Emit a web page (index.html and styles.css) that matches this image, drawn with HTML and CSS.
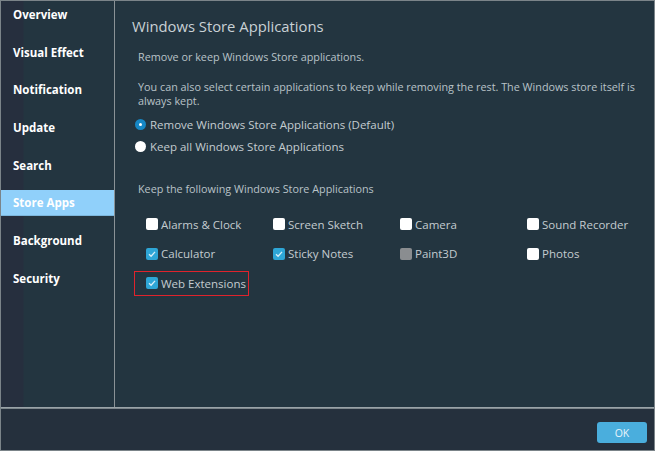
FILE: index.html
```html
<!DOCTYPE html>
<html>
<head>
<meta charset="utf-8">
<link rel="stylesheet" href="styles.css">
</head>
<body>
<div class="window">
  <div class="main">
    <nav class="sidebar">
      <div class="nav-item">Overview</div>
      <div class="nav-item">Visual Effect</div>
      <div class="nav-item">Notification</div>
      <div class="nav-item">Update</div>
      <div class="nav-item">Search</div>
      <div class="nav-item active">Store Apps</div>
      <div class="nav-item">Background</div>
      <div class="nav-item">Security</div>
    </nav>
    <section class="content">
      <h1 class="title">Windows Store Applications</h1>
      <div class="body">
        <p class="para">Remove or keep Windows Store applications.</p>
        <p class="para para-2">You can also select certain applications to keep while removing the rest. The Windows store itself is always kept.</p>
        <div class="radios">
          <label class="radio-row"><span class="radio checked"></span>Remove Windows Store Applications (Default)</label>
          <label class="radio-row"><span class="radio"></span>Keep all Windows Store Applications</label>
        </div>
        <p class="para keep">Keep the following Windows Store Applications</p>
        <div class="apps">
          <label class="app"><span class="box"></span>Alarms &amp; Clock</label>
          <label class="app"><span class="box"></span>Screen Sketch</label>
          <label class="app"><span class="box"></span>Camera</label>
          <label class="app"><span class="box"></span>Sound Recorder</label>
          <label class="app"><span class="box checked"><svg viewBox="0 0 12 12"><path d="M3 6.2 L5.1 8.3 L9 3.9" fill="none" stroke="#d6eef8" stroke-width="1.3"/></svg></span>Calculator</label>
          <label class="app"><span class="box checked"><svg viewBox="0 0 12 12"><path d="M3 6.2 L5.1 8.3 L9 3.9" fill="none" stroke="#d6eef8" stroke-width="1.3"/></svg></span>Sticky Notes</label>
          <label class="app"><span class="box disabled"></span>Paint3D</label>
          <label class="app"><span class="box"></span>Photos</label>
          <label class="app highlight"><span class="box checked"><svg viewBox="0 0 12 12"><path d="M3 6.2 L5.1 8.3 L9 3.9" fill="none" stroke="#d6eef8" stroke-width="1.3"/></svg></span>Web Extensions</label>
        </div>
      </div>
    </section>
  </div>
  <footer class="footer">
    <button class="ok">OK</button>
  </footer>
</div>
</body>
</html>
```
FILE: styles.css
```css
* { box-sizing: border-box; }
html, body { margin: 0; padding: 0; }
body {
  width: 655px;
  height: 451px;
  font-family: "Open Sans", "Noto Sans", sans-serif;
  background: #233540;
  overflow: hidden;
}
.window {
  width: 655px;
  height: 451px;
  border: 1px solid #7b8489;
  display: flex;
  flex-direction: column;
  background: #233540;
}
.main {
  height: 407px;
  flex: none;
  display: flex;
  border-bottom: 1px solid #9aa3a8;
}
.sidebar {
  width: 114px;
  border-right: 1px solid #8a9296;
  background: linear-gradient(to right, #262f3e 0px, #262f3e 22px, #233540 23px);
  display: flex;
  flex-direction: column;
  gap: 11.7px;
  padding-top: 1px;
}
.nav-item {
  height: 26px;
  line-height: 26px;
  padding-left: 12px;
  color: #ffffff;
  font-weight: 700;
  font-size: 11.5px;
}
.nav-item.active {
  background: #90d0fa;
  border-bottom: 1px solid #7cb6dc;
}
.content {
  flex: 1;
  padding: 14px 0 0 17px;
  color: #b9c3c8;
}
.title {
  margin: 0;
  font-size: 14.8px;
  font-weight: 400;
  line-height: 22px;
  color: #c9d1d5;
}
.body {
  padding-left: 6px;
  padding-top: 13px;
}
.para {
  margin: 0;
  font-size: 10.8px;
  line-height: 14px;
}
.para-2 {
  margin-top: 16px;
  width: 502px;
}
.radios {
  margin-top: 8.5px;
  display: flex;
  flex-direction: column;
  gap: 7px;
}
.radio-row {
  display: flex;
  align-items: center;
  font-size: 11.5px;
  line-height: 15px;
  margin-left: -3px;
  color: #c3ccd0;
}
.radio {
  width: 11px;
  height: 11px;
  border-radius: 50%;
  background: #ffffff;
  margin-right: 4px;
  position: relative;
}
.radio.checked {
  background: #1687c5;
}
.radio.checked::after {
  content: "";
  position: absolute;
  left: 4px;
  top: 4px;
  width: 3px;
  height: 3px;
  background: #ffffff;
  border-radius: 50%;
}
.keep {
  margin-top: 28.5px;
}
.apps {
  margin-top: 19.5px;
  display: grid;
  grid-template-columns: repeat(4, 127px);
  row-gap: 12.5px;
}
.app {
  display: flex;
  align-items: center;
  height: 17px;
  font-size: 11.5px;
  color: #c3ccd0;
  padding-left: 8px;
}
.box {
  width: 12px;
  height: 12px;
  border-radius: 2px;
  background: #ffffff;
  margin-right: 3px;
  display: inline-flex;
}
.box svg { width: 12px; height: 12px; }
.box.checked { background: #2ea6d6; }
.box.disabled { background: #8a8d90; }
.app.highlight {
  border: 1px solid #e0232c;
  margin-left: -4px;
  padding-left: 11px;
  width: 115px;
  height: 25px;
  margin-top: -4px;
}
.footer {
  flex: 1;
  border-top: 1px solid #7d878c;
  background: #25303d;
  display: flex;
  justify-content: flex-end;
  align-items: flex-start;
  padding: 13px 7px 0 0;
}
.ok {
  width: 50px;
  height: 21px;
  border: none;
  border-radius: 3px;
  background: #4aaedd;
  color: #e8f4fb;
  font-family: "Open Sans", sans-serif;
  font-size: 10.5px;
  padding: 0;
}
```
